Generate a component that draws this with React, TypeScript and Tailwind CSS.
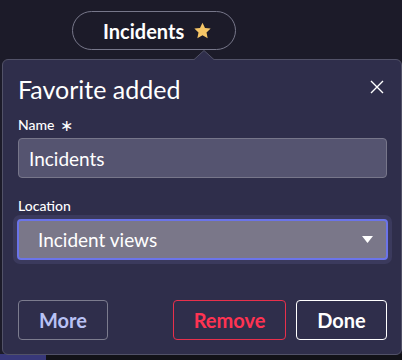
import React from "react";

export default function App() {
  return (
    <div
      className="relative h-[360px] w-[402px] overflow-hidden bg-[#1c1b29] text-white"
      style={{ fontFamily: "Lato, 'Noto Sans', sans-serif" }}
    >
      <div className="pt-[11px] pl-[72px]">
        <div className="flex h-[39px] w-[164px] items-center rounded-full border border-[#77778a] pl-[30px]">
          <span className="text-[20px] font-bold leading-none">Incidents</span>
          <svg width="21" height="20" viewBox="0 0 24 24" className="ml-[8px]">
            <path
              d="M12 2l3 6.3 6.8.8-5 4.7 1.4 6.8L12 17.2l-6.2 3.4 1.4-6.8-5-4.7 6.8-.8z"
              fill="#f6c667"
            />
          </svg>
        </div>
      </div>

      <div className="absolute bottom-0 left-0 flex h-[6px] w-full">
        <div className="w-[46px] bg-[#38387a]" />
        <div className="flex-1 bg-[#121218]" />
      </div>

      <div className="absolute left-[2px] top-[59px] h-[296px] w-[400px] rounded-[6px] border border-[#525268] bg-[#2f2e4b] pl-[15px] pr-[14px]">
        <svg
          width="22"
          height="11"
          viewBox="0 0 22 11"
          className="absolute left-[190px] top-[-10px]"
        >
          <path d="M0 10.5 L11 0.5 L22 10.5" fill="#2f2e4b" stroke="#525268" strokeWidth="1" />
          <rect x="0" y="10" width="22" height="2" fill="#2f2e4b" />
        </svg>

        <div className="flex items-center justify-between pt-[13px]">
          <h2 className="text-[25px] font-normal leading-[32px]">Favorite added</h2>
          <svg width="14" height="14" viewBox="0 0 14 14" className="mr-[3px] mt-[-4px]">
            <path d="M1 1L13 13M13 1L1 13" stroke="#fff" strokeWidth="1.4" />
          </svg>
        </div>

        <div className="mt-[11px] flex items-center text-[14px] font-medium leading-[18px]">
          Name
          <span className="ml-[5px] text-[16px] font-light">∗</span>
        </div>
        <div className="mt-[4px] flex h-[40px] items-center rounded-[4px] border border-[#77768a] bg-[#555470] pl-[10px] text-[19px] leading-none">
          Incidents
        </div>

        <div className="mt-[19px] text-[14px] font-medium leading-[18px]">Location</div>
        <div className="ml-[-5px] mr-[-5px] rounded-[7px] bg-[#3b3a5d] p-[4px]">
          <div className="flex h-[41px] items-center justify-between rounded-[4px] border-2 border-[#6b74ea] bg-[#7a7789] pl-[19px] pr-[13px]">
            <span className="text-[19px] leading-none">Incident views</span>
            <svg width="11" height="7" viewBox="0 0 11 7">
              <path d="M0 0H11L5.5 7z" fill="#fff" />
            </svg>
          </div>
        </div>

        <div className="mt-[36px] flex items-center">
          <button className="flex h-[40px] w-[90px] items-center justify-center rounded-[4px] border border-[#7c7c8e] text-[20px] font-bold text-[#b9c2f5]">
            More
          </button>
          <button className="ml-auto flex h-[40px] w-[113px] items-center justify-center rounded-[4px] border border-[#e8304c] text-[20px] font-bold text-[#ff3352]">
            Remove
          </button>
          <button className="ml-[10px] flex h-[40px] w-[91px] items-center justify-center rounded-[4px] border border-white text-[20px] font-bold text-white">
            Done
          </button>
        </div>
      </div>
    </div>
  );
}
